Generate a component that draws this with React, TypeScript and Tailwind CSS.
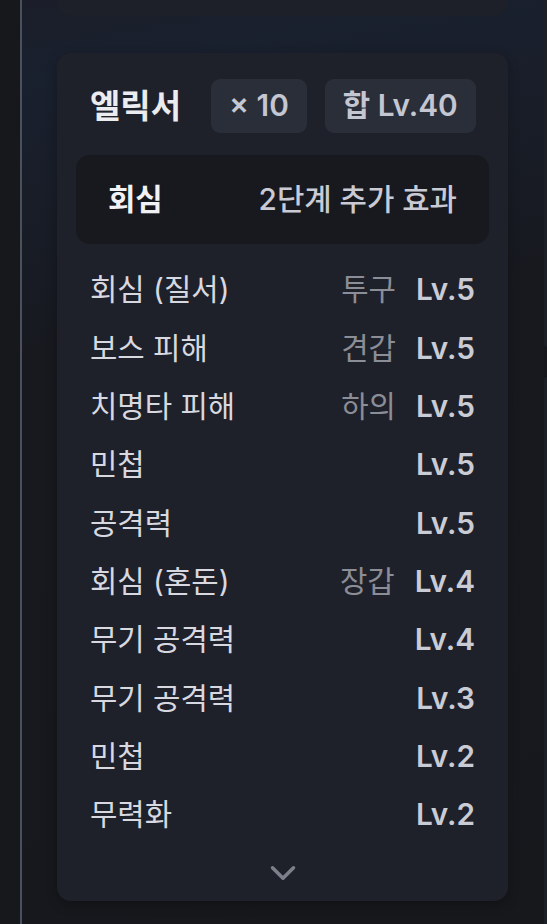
const FONT = { fontFamily: "Inter, 'Noto Sans CJK KR', 'Noto Sans', sans-serif" }

type Row = { name: string; slot?: string; lv: number }

const ROWS: Row[] = [
  { name: '회심 (질서)', slot: '투구', lv: 5 },
  { name: '보스 피해', slot: '견갑', lv: 5 },
  { name: '치명타 피해', slot: '하의', lv: 5 },
  { name: '민첩', lv: 5 },
  { name: '공격력', lv: 5 },
  { name: '회심 (혼돈)', slot: '장갑', lv: 4 },
  { name: '무기 공격력', lv: 4 },
  { name: '무기 공격력', lv: 3 },
  { name: '민첩', lv: 2 },
  { name: '무력화', lv: 2 },
]

function Badge({ children }: { children: React.ReactNode }) {
  return (
    <span className="h-[54px] shrink-0 whitespace-nowrap px-[18px] flex items-center rounded-[9px] bg-[#2a2e38] text-[29.75px] font-semibold leading-none text-[#c4c6d2]">
      {children}
    </span>
  )
}

function ElixirCard() {
  return (
    <div className="w-[451px] h-[848px] rounded-[14px] bg-[#1f212a] px-[19px] pt-[26px] flex flex-col shadow-[0_4px_12px_rgba(0,0,0,0.25)]">
      <div className="flex items-center pl-[14px] whitespace-nowrap">
        <span className="shrink-0 text-[33px] font-bold leading-none text-[#ebecf0] mr-[30px]">엘릭서</span>
        <div className="flex shrink-0 gap-[18px]">
          <Badge>× 10</Badge>
          <Badge>합 Lv.40</Badge>
        </div>
      </div>

      <div className="mt-[22px] h-[89px] rounded-[14px] bg-[#17191e] px-[32px] flex items-center justify-between whitespace-nowrap">
        <span className="text-[29.75px] font-bold leading-none text-[#f1f2f5]">회심</span>
        <span className="text-[29.75px] font-medium leading-none text-[#c9cad4]">2단계 추가 효과</span>
      </div>

      <div className="mt-[17px] px-[14px] flex flex-col">
        {ROWS.map((r, i) => (
          <div key={i} className="h-[58.33px] flex items-center text-[29.75px] leading-none whitespace-nowrap">
            <span className="font-normal text-[#d8d9e0]">{r.name}</span>
            <span className="ml-auto text-[#8b8d97]">{r.slot ?? ''}</span>
            <span className="ml-[20px] shrink-0 font-semibold text-[#c9cbd5]">Lv.{r.lv}</span>
          </div>
        ))}
      </div>

      <div className="mt-[8px] flex justify-center">
        <svg width="42" height="42" viewBox="0 0 24 24" fill="none" stroke="#7d808b" strokeWidth="2" strokeLinecap="round" strokeLinejoin="round">
          <path d="m6 9 6 6 6-6" />
        </svg>
      </div>
    </div>
  )
}

export default function App() {
  return (
    <div className="w-[547px] h-[924px] flex overflow-hidden bg-[#16181d]" style={FONT}>
      <div className="w-[20px] shrink-0 bg-[#16181c]" />
      <div className="w-[2px] shrink-0 bg-[#4a505c]" />
      <div className="w-[522px] shrink-0 flex flex-col pl-[35px] bg-[linear-gradient(170deg,#1b1e29_0%,#19202e_8%,#17191f_35%,#16181c_100%)]">
        <div className="w-[451px] h-[16px] rounded-b-[14px] bg-[#1e2029]" />
        <div className="mt-[37px]">
          <ElixirCard />
        </div>
      </div>
      <div className="w-[3px] shrink-0 flex flex-col">
        <div className="h-[347px] rounded-bl-[8px] bg-[#1e2028]" />
        <div className="mt-[30px] flex-1 rounded-tl-[8px] bg-[#1e2028]" />
      </div>
    </div>
  )
}
